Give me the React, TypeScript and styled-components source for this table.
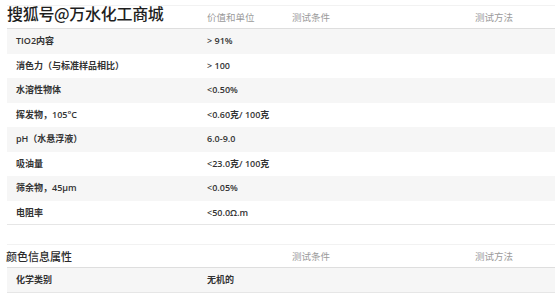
import React, { FC } from "react";
import styled, { createGlobalStyle } from "styled-components";

// Types
type Row = { name: string; value: string };

// Local Data
const columns = "191px 85px 183px 89px";

const props1: Row[] = [
  { name: "TIO2内容", value: "> 91%" },
  { name: "消色力（与标准样品相比）", value: "> 100" },
  { name: "水溶性物体", value: "<0.50%" },
  { name: "挥发物，105°C", value: "<0.60克/ 100克" },
  { name: "pH（水悬浮液）", value: "6.0-9.0" },
  { name: "吸油量", value: "<23.0克/ 100克" },
  { name: "筛余物，45μm", value: "<0.05%" },
  { name: "电阻率", value: "<50.0Ω.m" },
];

const props2: Row[] = [{ name: "化学类别", value: "无机的" }];

const App: FC = () => {
  return (
    <>
      <GlobalStyle />
      <Page>
        <Watermark>搜狐号@万水化工商城</Watermark>
        <Table>
          <HeadRow>
            <HeadCell />
            <HeadCell>价值和单位</HeadCell>
            <HeadCell>测试条件</HeadCell>
            <HeadCell>测试方法</HeadCell>
          </HeadRow>
          {props1.map((row, i) => (
            <BodyRow key={row.name} $shaded={i % 2 === 0} $last={i === props1.length - 1}>
              <Cell>{row.name}</Cell>
              <Cell>{row.value}</Cell>
              <Cell />
              <Cell />
            </BodyRow>
          ))}
        </Table>
        <Spacer />
        <Table>
          <HeadRow>
            <SectionTitle>颜色信息属性</SectionTitle>
            <HeadCell />
            <HeadCell>测试条件</HeadCell>
            <HeadCell>测试方法</HeadCell>
          </HeadRow>
          {props2.map((row, i) => (
            <BodyRow key={row.name} $shaded={i % 2 === 0} $last>
              <Cell>{row.name}</Cell>
              <Cell>{row.value}</Cell>
              <Cell />
              <Cell />
            </BodyRow>
          ))}
        </Table>
      </Page>
    </>
  );
};

// Styled components
const GlobalStyle = createGlobalStyle`
  html, body {
    margin: 0;
    padding: 0;
    background: #ffffff;
  }
  body {
    font-family: "Open Sans", "Noto Sans CJK SC", sans-serif;
  }
`;

const Page = styled.div`
  width: 558px;
  height: 301px;
  position: relative;
  overflow: hidden;
  padding: 5px 3px 0 7px;
  box-sizing: border-box;
`;

const Watermark = styled.div`
  position: absolute;
  top: 3px;
  left: 7px;
  font-family: "Noto Sans CJK SC", sans-serif;
  font-size: 16px;
  line-height: 20px;
  font-weight: 500;
  color: #1e1e1e;
  letter-spacing: -0.3px;
  z-index: 2;
`;

const Table = styled.div`
  width: 548px;
  display: flex;
  flex-direction: column;
`;

const HeadRow = styled.div`
  display: grid;
  grid-template-columns: ${columns};
  height: 24px;
  box-sizing: border-box;
  border-top: 1px solid #f2f2f2;
  border-bottom: 1px solid #dedede;
  align-items: center;
`;

const HeadCell = styled.div`
  padding-left: 9px;
  font-family: "Noto Sans CJK SC", sans-serif;
  font-size: 9.5px;
  color: #9a9a9a;
  white-space: nowrap;
`;

const SectionTitle = styled.div`
  margin-left: -1px;
  font-family: "Noto Sans CJK SC", sans-serif;
  font-size: 11px;
  font-weight: 500;
  color: #2a2a2a;
  white-space: nowrap;
`;

const BodyRow = styled.div<{ $shaded: boolean; $last?: boolean }>`
  display: grid;
  grid-template-columns: ${columns};
  height: 24.5px;
  box-sizing: border-box;
  align-items: center;
  background: ${(p) => (p.$shaded ? "#f6f6f6" : "#ffffff")};
  border-bottom: 1px solid ${(p) => (p.$last ? "#e6e6e6" : "transparent")};
`;

const Cell = styled.div`
  padding-left: 9px;
  font-size: 9px;
  font-weight: 600;
  color: #333333;
  white-space: nowrap;
`;

const Spacer = styled.div`
  height: 19px;
`;

export default App;
